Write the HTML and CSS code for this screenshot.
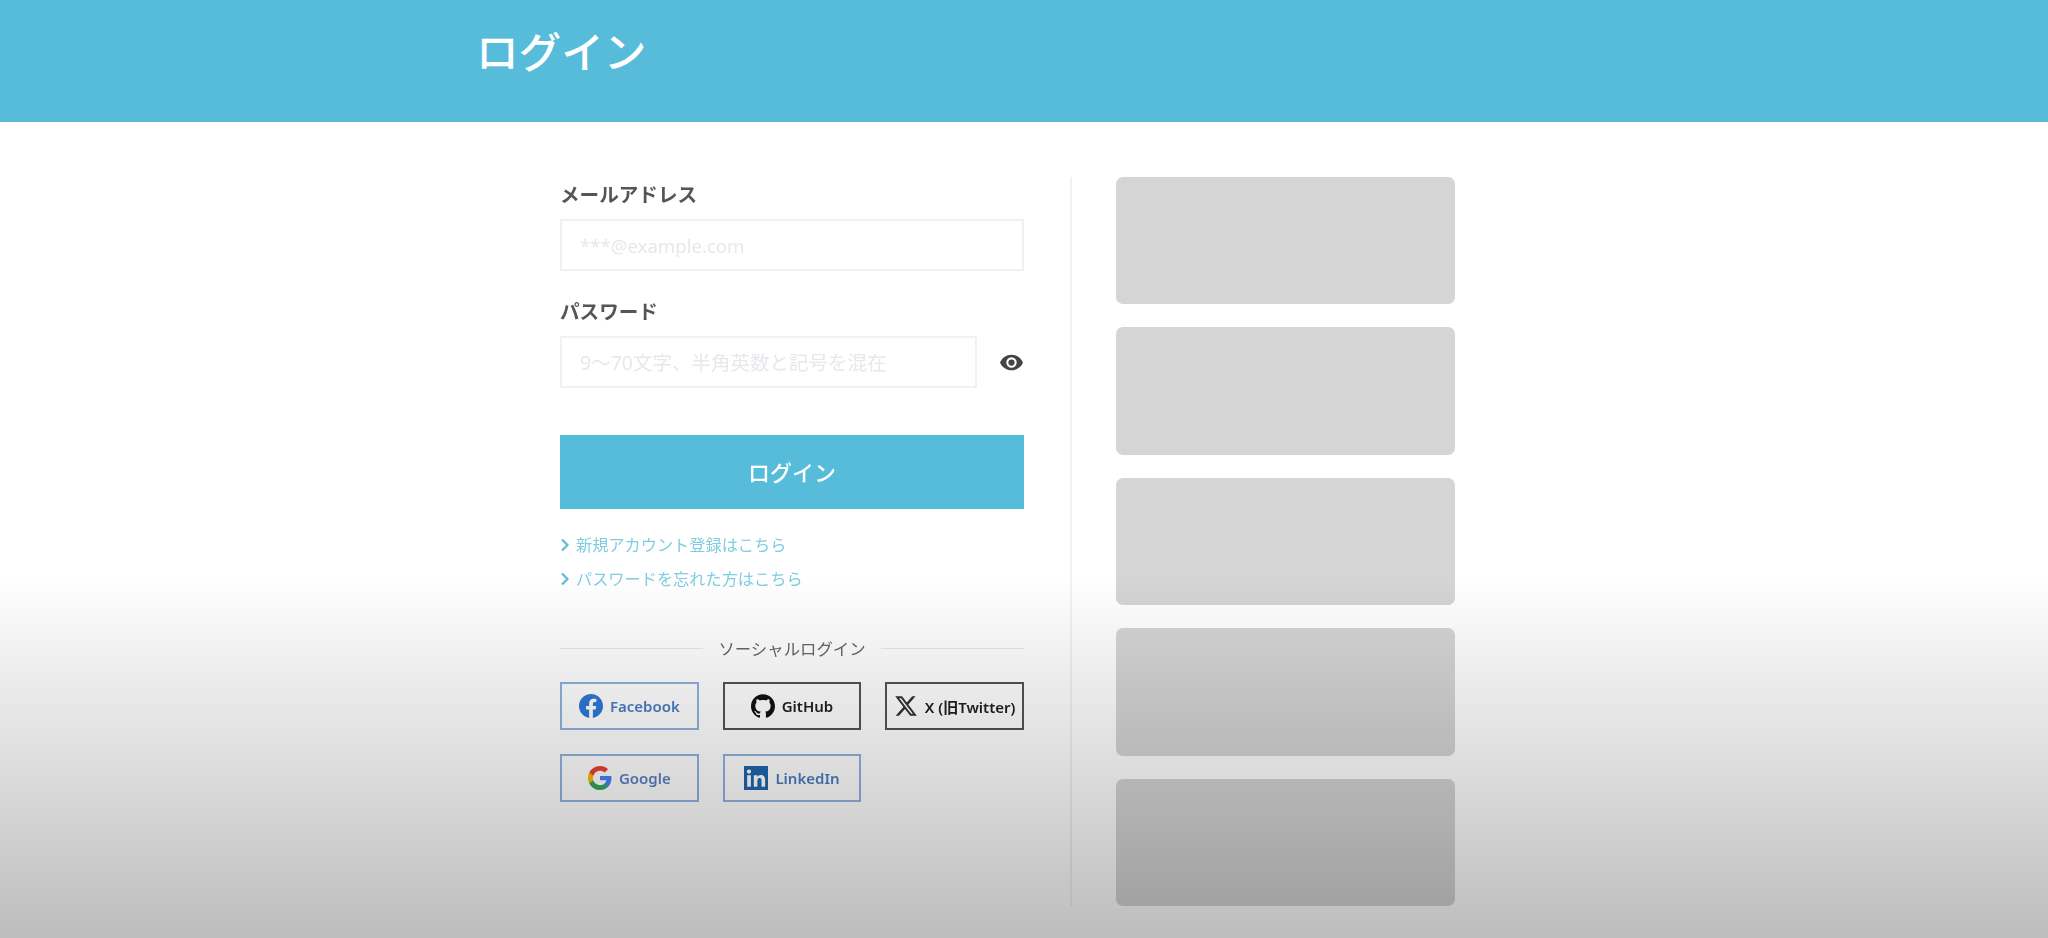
FILE: index.html
```html
<!DOCTYPE html>
<html lang="ja">
<head>
<meta charset="utf-8">
<title>ログイン</title>
<link rel="stylesheet" href="styles.css">
</head>
<body>
<header class="page-head"><h1>ログイン</h1></header>
<main class="content">
  <form class="login">
    <label class="field-label" for="mail">メールアドレス</label>
    <input class="text-input mail" id="mail" type="text" placeholder="***@example.com">
    <label class="field-label second" for="pass">パスワード</label>
    <div class="pass-row">
      <input class="text-input" id="pass" type="text" placeholder="9〜70文字、半角英数と記号を混在">
      <svg class="eye" viewBox="0 0 24 24" aria-hidden="true"><path fill="#444" d="M12 4.5C7 4.5 2.7 7.6 1 12c1.700 4.400 6 7.500 11 7.500s9.300-3.100 11-7.500c-1.700-4.400-6-7.500-11-7.500zM12 17a5 5 0 1 1 0-10 5 5 0 0 1 0 10zm0-8a3 3 0 1 0 0 6 3 3 0 0 0 0-6z"/></svg>
    </div>
    <button class="submit" type="button">ログイン</button>
    <ul class="links">
      <li><svg class="chev" viewBox="0 0 10 14"><path d="M2 1.500 7.500 7 2 12.500" fill="none" stroke="#5dbdd8" stroke-width="2.2"/></svg><a href="#">新規アカウント登録はこちら</a></li>
      <li><svg class="chev" viewBox="0 0 10 14"><path d="M2 1.500 7.500 7 2 12.500" fill="none" stroke="#5dbdd8" stroke-width="2.2"/></svg><a href="#">パスワードを忘れた方はこちら</a></li>
    </ul>
    <div class="social-title"><span>ソーシャルログイン</span></div>
    <div class="social">
      <a class="sbtn blue" href="#"><svg viewBox="0 0 24 24"><path fill="#2f78d6" d="M24 12.073c0-6.627-5.373-12-12-12s-12 5.373-12 12c0 5.990 4.388 10.954 10.125 11.854v-8.385H7.078v-3.470h3.047V9.430c0-3.007 1.792-4.669 4.533-4.669 1.312 0 2.686.235 2.686.235v2.953H15.830c-1.491 0-1.956.925-1.956 1.874v2.250h3.328l-.532 3.470h-2.796v8.385C19.612 23.027 24 18.062 24 12.073z"/></svg>Facebook</a>
      <a class="sbtn dark" href="#"><svg viewBox="0 0 24 24"><path fill="#111" d="M12 .297c-6.630 0-12 5.373-12 12 0 5.303 3.438 9.800 8.205 11.385.6.113.82-.258.82-.577 0-.285-.01-1.040-.015-2.040-3.338.724-4.042-1.610-4.042-1.610C4.422 18.070 3.633 17.700 3.633 17.700c-1.087-.744.084-.729.084-.729 1.205.084 1.838 1.236 1.838 1.236 1.070 1.835 2.809 1.305 3.495.998.108-.776.417-1.305.760-1.605-2.665-.3-5.466-1.332-5.466-5.930 0-1.310.465-2.380 1.235-3.220-.135-.303-.540-1.523.105-3.176 0 0 1.005-.322 3.300 1.230.960-.267 1.980-.399 3-.405 1.020.006 2.040.138 3 .405 2.280-1.552 3.285-1.230 3.285-1.230.645 1.653.240 2.873.120 3.176.765.840 1.230 1.910 1.230 3.220 0 4.610-2.805 5.625-5.475 5.920.420.360.810 1.096.810 2.220 0 1.606-.015 2.896-.015 3.286 0 .315.210.690.825.570C20.565 22.092 24 17.592 24 12.297c0-6.627-5.373-12-12-12"/></svg>GitHub</a>
      <a class="sbtn dark" href="#"><svg viewBox="0 0 24 24"><path fill="#333" d="M18.244 2.250h3.308l-7.227 8.260 8.502 11.240H16.170l-5.214-6.817L4.990 21.750H1.680l7.730-8.835L1.254 2.250H8.080l4.713 6.231zm-1.161 17.520h1.833L7.084 4.126H5.117z"/></svg>X (旧Twitter)</a>
      <a class="sbtn blue muted" href="#"><svg viewBox="0 0 24 24"><path fill="#4285f4" d="M23.500 12.270c0-.8-.07-1.570-.2-2.310H12v4.370h6.460a5.520 5.520 0 0 1-2.400 3.620v3h3.880c2.270-2.090 3.560-5.170 3.560-8.680z"/><path fill="#34a853" d="M12 24c3.240 0 5.950-1.070 7.940-2.910l-3.880-3.010c-1.070.72-2.440 1.150-4.060 1.150-3.130 0-5.780-2.110-6.720-4.950H1.270v3.110A12 12 0 0 0 12 24z"/><path fill="#fbbc05" d="M5.280 14.280a7.200 7.200 0 0 1 0-4.560V6.610H1.270a12 12 0 0 0 0 10.780z"/><path fill="#ea4335" d="M12 4.770c1.770 0 3.350.61 4.600 1.800l3.440-3.440C17.950 1.190 15.240 0 12 0A12 12 0 0 0 1.270 6.610l4.010 3.110C6.220 6.880 8.870 4.770 12 4.770z"/></svg>Google</a>
      <a class="sbtn blue" href="#"><svg viewBox="0 0 24 24"><path fill="#1f66ad" d="M0 0h24v24H0zM3.200 9.200v11.600h3.700V9.200zM5 3.400a2.100 2.100 0 1 0 0 4.300 2.100 2.100 0 0 0 0-4.300zm4.800 5.800v11.600h3.600v-5.800c0-1.500.3-3 2.200-3s1.900 1.700 1.900 3.100v5.700h3.600v-6.400c0-3.100-.7-5.500-4.300-5.500-1.700 0-2.900.9-3.400 1.800V9.200z" fill-rule="evenodd"/></svg>LinkedIn</a>
    </div>
  </form>
  <div class="rule"></div>
  <aside class="cards">
    <div class="card"></div>
    <div class="card"></div>
    <div class="card"></div>
    <div class="card"></div>
    <div class="card"></div>
  </aside>
</main>
<div class="shade"></div>
</body>
</html>
```
FILE: styles.css
```css
* { box-sizing: border-box; }
html, body { height: 100%; }
body {
  margin: 0;
  position: relative;
  overflow: hidden;
  background: #fff;
  color: #444;
  font-family: "Noto Sans", "Noto Sans CJK JP", sans-serif;
  filter: blur(.45px);
}
.page-head {
  height: 122px;
  padding-left: 476px;
  background: #57bcd9;
}
.page-head h1 {
  margin: 0;
  padding-top: 21px;
  font-size: 42.6px;
  line-height: 60px;
  font-weight: 500;
  color: #fff;
}
.content {
  display: flex;
  padding: 55px 0 0 560px;
}
.login { width: 464px; }
.field-label {
  display: block;
  height: 34px;
  padding-top: 1px;
  margin-bottom: 8px;
  font-size: 19.6px;
  line-height: 34px;
  font-weight: 700;
  color: #555;
}
.field-label.second { margin-top: 23px; }
.text-input {
  display: block;
  width: 100%;
  height: 52px;
  padding: 0 18px;
  border: 2px solid #f0f1f3;
  background: #fff;
  outline: 0;
  font: 400 19.5px/1 "Noto Sans", "Noto Sans CJK JP", sans-serif;
}
.text-input.mail { font-size: 18.6px; }
.text-input::placeholder { color: #e6e8eb; opacity: 1; }
.pass-row {
  display: flex;
  align-items: center;
  gap: 22px;
}
.eye { width: 25px; height: 25px; flex: none; }
.submit {
  display: block;
  width: 100%;
  height: 74px;
  margin-top: 47px;
  border: 0;
  background: #57bcd9;
  color: #fff;
  font: 500 22px/1 "Noto Sans", "Noto Sans CJK JP", sans-serif;
}
.links {
  list-style: none;
  margin: 24px 0 0;
  padding: 0;
}
.links li {
  display: flex;
  align-items: center;
  gap: 6px;
  height: 24px;
  margin-bottom: 10px;
  font-size: 16.2px;
  line-height: 24px;
}
.links a { color: #80cde1; text-decoration: none; }
.chev { width: 10px; height: 14px; flex: none; }
.social-title {
  display: flex;
  align-items: center;
  gap: 15px;
  height: 24px;
  margin-top: 45px;
  font-size: 16.4px;
  color: #666;
}
.social-title::before,
.social-title::after {
  content: "";
  flex: 1;
  height: 1px;
  background: #e8e8e8;
}
.social {
  display: grid;
  grid-template-columns: repeat(3, 1fr);
  gap: 24px;
  margin-top: 22px;
}
.sbtn {
  display: flex;
  align-items: center;
  justify-content: center;
  gap: 7px;
  height: 48px;
  border: 2px solid;
  font-size: 15px;
  font-weight: 600;
  text-decoration: none;
  white-space: nowrap;
}
.sbtn svg { width: 24px; height: 24px; flex: none; }
.sbtn.blue { border-color: #8fb4df; color: #4a7cc0; }
.sbtn.blue.muted { color: #5b82c2; }
.sbtn.dark { border-color: #555; color: #222; }
.rule {
  width: 2px;
  height: 729px;
  margin: 0 44px 0 46px;
  background: #f2f2f2;
}
.cards {
  display: grid;
  grid-template-rows: repeat(5, 1fr);
  gap: 23px;
  width: 339px;
  height: 729px;
}
.card {
  border-radius: 7px;
  background: #d5d5d5;
}
.shade {
  position: absolute;
  left: 0;
  right: 0;
  top: 575px;
  bottom: 0;
  background: linear-gradient(to bottom, rgba(0,0,0,0), rgba(0,0,0,.26));
  pointer-events: none;
}
```
